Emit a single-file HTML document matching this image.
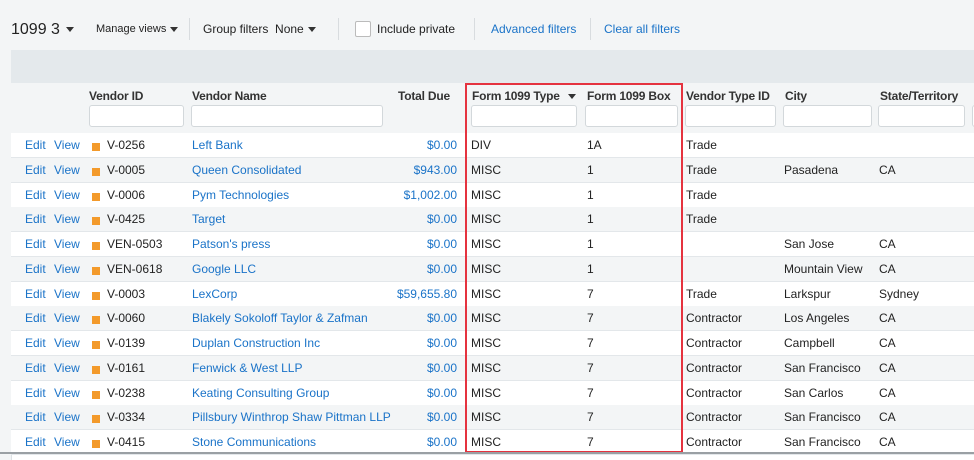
<html><head><style>
body{margin:0;width:974px;height:454px;overflow:hidden;background:#f3f5f6;font-family:"Liberation Sans",sans-serif;font-size:12px;color:#222;position:relative}
.a{position:absolute;white-space:nowrap}
.lk{color:#1a73c8}
.tb{position:absolute;left:11px;top:50px;width:970px;height:410px;background:#fff;border-left:1px solid #dde2e5}
.band{position:absolute;left:11px;top:50px;width:970px;height:33px;background:#e4e9ec}
.hdr{position:absolute;left:11px;top:83px;width:970px;height:50px;background:#f3f5f6;border-bottom:1px solid #dde2e5}
.row{position:absolute;left:11px;width:970px;height:24px;border-bottom:1px solid #e3e7ea}
.in{position:absolute;top:105px;height:20px;background:#fff;border:1px solid #d3d8db;border-radius:3px}
.h{font-weight:bold;top:89px;color:#333;font-size:12px;letter-spacing:-0.2px}
.sq{position:absolute;width:8px;height:8px;background:#f39a2b}
.car{display:inline-block;width:0;height:0;border-left:4px solid transparent;border-right:4px solid transparent;border-top:5px solid #333;vertical-align:middle;margin-left:4px}
</style></head><body>
<div class="a" style="left:11px;top:21px;font-size:16px;color:#222">1099 3<span class="car" style="margin-left:6px"></span></div>
<div class="a" style="left:96px;top:23px;font-size:11px">Manage views<span class="car"></span></div>
<div style="position:absolute;left:189px;top:18px;width:1px;height:22px;background:#d8dcdf"></div>
<div class="a" style="left:203px;top:22px;font-size:12px">Group filters&nbsp; None<span class="car"></span></div>
<div style="position:absolute;left:338px;top:18px;width:1px;height:22px;background:#d8dcdf"></div>
<div style="position:absolute;left:355px;top:21px;width:14px;height:14px;border:1px solid #bbb;background:#fff;border-radius:2px"></div>
<div class="a" style="left:377px;top:22px">Include private</div>
<div style="position:absolute;left:474px;top:18px;width:1px;height:22px;background:#d8dcdf"></div>
<div class="a lk" style="left:491px;top:22px">Advanced filters</div>
<div style="position:absolute;left:590px;top:18px;width:1px;height:22px;background:#d8dcdf"></div>
<div class="a lk" style="left:604px;top:22px">Clear all filters</div>
<div class="tb"></div><div class="band"></div><div class="hdr"></div>
<div class="a h" style="left:89px">Vendor ID</div>
<div class="a h" style="left:192px">Vendor Name</div>
<div class="a h" style="left:398px">Total Due</div>
<div class="a h" style="left:472px">Form 1099 Type<span class="car" style="margin-left:8px"></span></div>
<div class="a h" style="left:587px">Form 1099 Box</div>
<div class="a h" style="left:686px">Vendor Type ID</div>
<div class="a h" style="left:785px">City</div>
<div class="a h" style="left:880px">State/Territory</div>
<div class="in" style="left:89px;width:93px"></div>
<div class="in" style="left:191px;width:190px"></div>
<div class="in" style="left:471px;width:104px"></div>
<div class="in" style="left:585px;width:91px"></div>
<div class="in" style="left:685px;width:89px"></div>
<div class="in" style="left:783px;width:87px"></div>
<div class="in" style="left:878px;width:85px"></div>
<div class="in" style="left:972px;width:10px"></div>
<div id="rows"></div>
<script>
var d=[["V-0256","Left Bank","$0.00","DIV","1A","Trade","",""],
["V-0005","Queen Consolidated","$943.00","MISC","1","Trade","Pasadena","CA"],
["V-0006","Pym Technologies","$1,002.00","MISC","1","Trade","",""],
["V-0425","Target","$0.00","MISC","1","Trade","",""],
["VEN-0503","Patson's press","$0.00","MISC","1","","San Jose","CA"],
["VEN-0618","Google LLC","$0.00","MISC","1","","Mountain View","CA"],
["V-0003","LexCorp","$59,655.80","MISC","7","Trade","Larkspur","Sydney"],
["V-0060","Blakely Sokoloff Taylor & Zafman","$0.00","MISC","7","Contractor","Los Angeles","CA"],
["V-0139","Duplan Construction Inc","$0.00","MISC","7","Contractor","Campbell","CA"],
["V-0161","Fenwick & West LLP","$0.00","MISC","7","Contractor","San Francisco","CA"],
["V-0238","Keating Consulting Group","$0.00","MISC","7","Contractor","San Carlos","CA"],
["V-0334","Pillsbury Winthrop Shaw Pittman LLP","$0.00","MISC","7","Contractor","San Francisco","CA"],
["V-0415","Stone Communications","$0.00","MISC","7","Contractor","San Francisco","CA"]];
var h="";
d.forEach(function(r,i){var y=133+i*24.75;var t=y+5;
h+='<div class="row" style="top:'+y+'px;background:'+(i%2?'#f3f5f6':'#fff')+'"></div>';
h+='<div class="a lk" style="left:25px;top:'+t+'px">Edit</div><div class="a lk" style="left:54px;top:'+t+'px">View</div>';
h+='<div class="sq" style="left:92px;top:'+(y+10)+'px"></div>';
h+='<div class="a" style="left:107px;top:'+t+'px">'+r[0]+'</div>';
h+='<div class="a lk" style="left:192px;top:'+t+'px">'+r[1].replace('&','&amp;')+'</div>';
h+='<div class="a lk" style="right:517px;top:'+t+'px">'+r[2]+'</div>';
h+='<div class="a" style="left:471px;top:'+t+'px">'+r[3]+'</div>';
h+='<div class="a" style="left:587px;top:'+t+'px">'+r[4]+'</div>';
h+='<div class="a" style="left:686px;top:'+t+'px">'+r[5]+'</div>';
h+='<div class="a" style="left:784px;top:'+t+'px">'+r[6]+'</div>';
h+='<div class="a" style="left:879px;top:'+t+'px">'+r[7]+'</div>';});
document.getElementById("rows").innerHTML=h;
</script>
<div style="position:absolute;left:465px;top:83px;width:214px;height:366px;border:2px solid #e5333f"></div>
<div style="position:absolute;left:0;top:452px;width:974px;height:2px;background:#9aa0a4"></div>
</body></html>
